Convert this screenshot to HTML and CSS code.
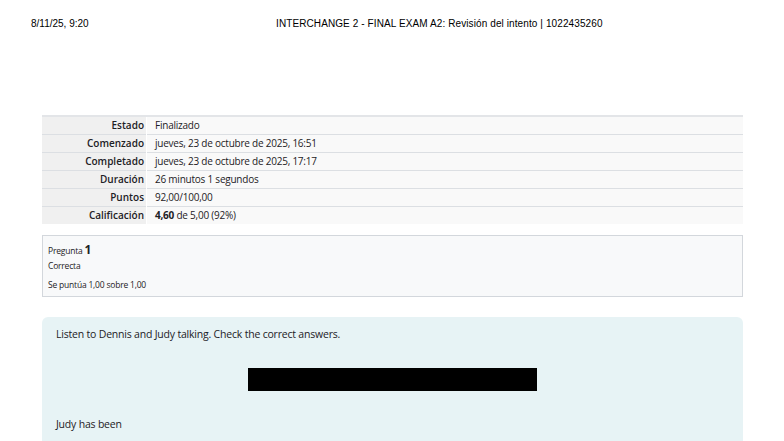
FILE: index.html
```html
<!DOCTYPE html>
<html lang="es">
<head>
    <meta charset="UTF-8">
    <title>INTERCHANGE 2 - FINAL EXAM A2: Revisión del intento | 1022435260</title>
    <link rel="stylesheet" href="styles.css">
</head>
<body>

    <div class="print-header">
        <span class="print-date">8/11/25, 9:20</span>
        <span class="print-title">INTERCHANGE 2 - FINAL EXAM A2: Revisión del intento | 1022435260</span>
    </div>

    <div class="page">
        <table class="summary">
            <tr><th>Estado</th><td>Finalizado</td></tr>
            <tr><th>Comenzado</th><td>jueves, 23 de octubre de 2025, 16:51</td></tr>
            <tr><th>Completado</th><td>jueves, 23 de octubre de 2025, 17:17</td></tr>
            <tr><th>Duración</th><td>26 minutos 1 segundos</td></tr>
            <tr><th>Puntos</th><td>92,00/100,00</td></tr>
            <tr><th>Calificación</th><td><b>4,60</b> de 5,00 (92%)</td></tr>
        </table>

        <div class="question-info">
            <div class="qno">Pregunta <span class="num">1</span></div>
            <div class="state">Correcta</div>
            <div class="grade">Se puntúa 1,00 sobre 1,00</div>
        </div>

        <div class="question-content">
            <p class="prompt">Listen to Dennis and Judy talking. Check the correct answers.</p>
            <div class="audio-player"></div>
            <p class="stem">Judy has been</p>
        </div>
    </div>

</body>
</html>
```

FILE: styles.css
```css
body {
    font-family: 'Open Sans', 'Noto Sans', sans-serif;
    background-color: #ffffff;
    color: #1d2125;
    margin: 0;
    padding: 0;
    overflow: hidden;
}

.print-header {
    display: flex;
    padding: 18px 0 0 31px;
    font-family: 'Liberation Sans', Arial, sans-serif;
    font-size: 10px;
    color: #000;
}

.print-date {
    width: 245px;
}

.print-title {
    letter-spacing: 0.1px;
}

.page {
    width: 701px;
    margin: 86px 0 0 42px;
}

.summary {
    width: 100%;
    border-collapse: collapse;
    font-size: 10px;
    letter-spacing: -0.23px;
}

.summary tr {
    border-top: 1px solid #dcdfe3;
    height: 18px;
}

.summary tr:first-child {
    border-top: 2px solid #e3e5e8;
}

.summary th {
    width: 102px;
    text-align: right;
    font-weight: 600;
    letter-spacing: 0;
    background-color: #f0f0f0;
    padding: 0 2px 0 0;
    border-right: 1px solid #ffffff;
}

.summary td {
    background-color: #f9f9f9;
    padding: 0 0 0 8px;
}

.question-info {
    margin-top: 11px;
    height: 60px;
    border: 1px solid #d3d7dc;
    background-color: #f8f9fa;
    padding: 0 0 0 5px;
    font-size: 8.5px;
    letter-spacing: -0.2px;
}

.qno {
    margin-top: 5px;
}

.qno .num {
    font-size: 12px;
    font-weight: 700;
}

.state {
    margin-top: 2px;
}

.grade {
    margin-top: 8px;
}

.question-content {
    margin-top: 20px;
    height: 106px;
    background-color: #e7f3f5;
    border-radius: 6px 6px 0 0;
    padding: 10px 14px 8px;
    font-size: 10.5px;
    letter-spacing: -0.2px;
}

.prompt {
    margin: 0;
}

.audio-player {
    width: 289px;
    height: 23px;
    background-color: #000;
    margin: 27px auto 0;
}

.stem {
    margin: 26px 0 0;
}
```
